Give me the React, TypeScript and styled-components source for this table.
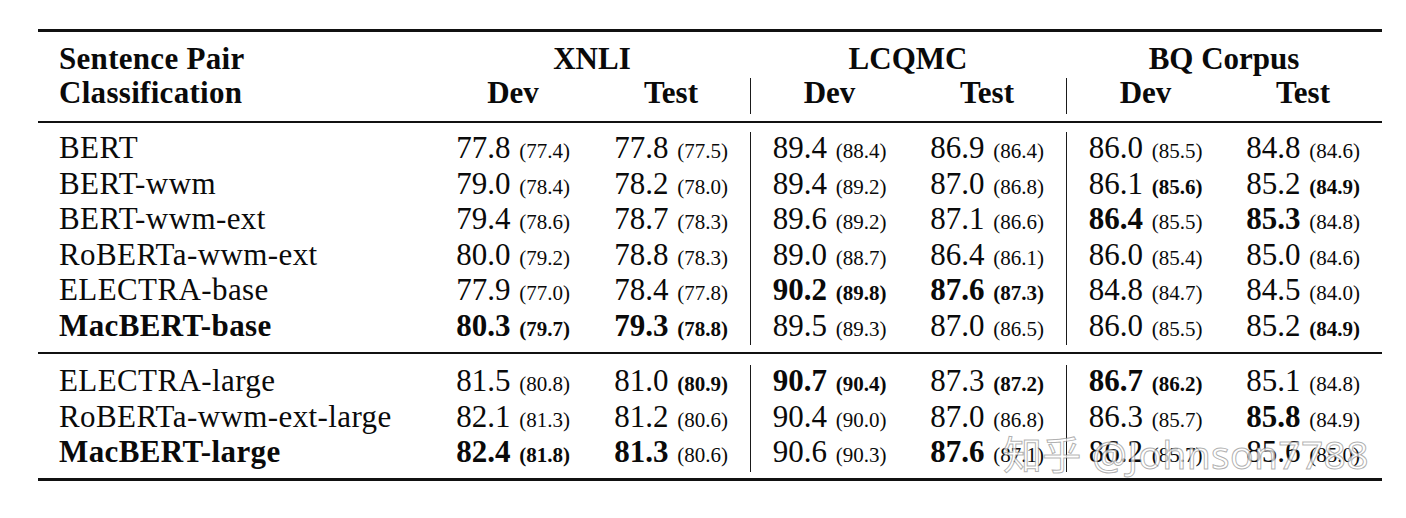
import React from "react";
import styled, { createGlobalStyle } from "styled-components";

const GlobalStyle = createGlobalStyle`
  html, body { margin: 0; padding: 0; background: #ffffff; }
  body { font-family: "Liberation Serif", "Times New Roman", serif; color: #0a0a0a; }
`;

const Page = styled.div`
  padding: 29px 0 0 38px;
  width: 1406px;
  height: 518px;
  box-sizing: border-box;
  overflow: hidden;
`;

const Table = styled.div`
  position: relative;
  width: 1344px;
`;

const Rule = styled.div<{ $thick?: boolean }>`
  height: ${(p) => (p.$thick ? "3px" : "2px")};
  background: #111;
`;

const Grid = styled.div<{ $pt: number; $pb: number }>`
  display: grid;
  grid-template-columns: 396px repeat(6, 158px);
  padding: ${(p) => p.$pt}px 0 ${(p) => p.$pb}px;
`;

const HeadCell = styled.div<{ $span?: number; $left?: boolean; $divider?: boolean; $h: number }>`
  grid-column: span ${(p) => p.$span ?? 1};
  font-weight: 700;
  font-size: 31px;
  line-height: 30px;
  height: ${(p) => p.$h}px;
  box-sizing: border-box;
  text-align: ${(p) => (p.$left ? "left" : "center")};
  padding-left: ${(p) => (p.$left ? "21px" : "0")};
  letter-spacing: ${(p) => (p.$left ? "0.3px" : "0")};
  border-left: ${(p) => (p.$divider ? "1.5px solid #1a1a1a" : "none")};
  white-space: nowrap;
`;

const NameCell = styled.div<{ $bold?: boolean }>`
  font-size: 31px;
  line-height: 31.5px;
  height: 35.5px;
  padding-left: 21px;
  letter-spacing: 0.4px;
  font-weight: ${(p) => (p.$bold ? 700 : 400)};
  white-space: nowrap;
  box-sizing: border-box;
`;

const NumCell = styled.div<{ $divider?: boolean }>`
  font-size: 31px;
  line-height: 31.5px;
  height: 35.5px;
  text-align: center;
  white-space: nowrap;
  box-sizing: border-box;
  border-left: ${(p) => (p.$divider ? "1.5px solid #1a1a1a" : "none")};
`;

const Main = styled.span<{ $bold?: boolean }>`
  font-weight: ${(p) => (p.$bold ? 700 : 400)};
`;

const Sub = styled.span<{ $bold?: boolean }>`
  font-size: 21px;
  line-height: 1;
  font-weight: ${(p) => (p.$bold ? 700 : 400)};
  margin-left: 1px;
`;

const Watermark = styled.div`
  position: absolute;
  left: 965px;
  top: 402px;
  font-family: "Noto Sans", "Noto Sans CJK SC", sans-serif;
  font-size: 39px;
  line-height: 46px;
  font-weight: 400;
  letter-spacing: 0.3px;
  color: rgba(255, 255, 255, 0.72);
  -webkit-text-stroke: 1px rgba(110, 110, 110, 0.55);
  white-space: nowrap;
  pointer-events: none;
`;

type Val = { v: string; p: string; bv?: boolean; bp?: boolean };
type Row = { name: string; bold?: boolean; vals: Val[] };

const V = (v: string, p: string, bv = false, bp = false): Val => ({ v, p, bv, bp });

const group1: Row[] = [
  { name: "BERT", vals: [V("77.8", "77.4"), V("77.8", "77.5"), V("89.4", "88.4"), V("86.9", "86.4"), V("86.0", "85.5"), V("84.8", "84.6")] },
  { name: "BERT-wwm", vals: [V("79.0", "78.4"), V("78.2", "78.0"), V("89.4", "89.2"), V("87.0", "86.8"), V("86.1", "85.6", false, true), V("85.2", "84.9", false, true)] },
  { name: "BERT-wwm-ext", vals: [V("79.4", "78.6"), V("78.7", "78.3"), V("89.6", "89.2"), V("87.1", "86.6"), V("86.4", "85.5", true), V("85.3", "84.8", true)] },
  { name: "RoBERTa-wwm-ext", vals: [V("80.0", "79.2"), V("78.8", "78.3"), V("89.0", "88.7"), V("86.4", "86.1"), V("86.0", "85.4"), V("85.0", "84.6")] },
  { name: "ELECTRA-base", vals: [V("77.9", "77.0"), V("78.4", "77.8"), V("90.2", "89.8", true, true), V("87.6", "87.3", true, true), V("84.8", "84.7"), V("84.5", "84.0")] },
  { name: "MacBERT-base", bold: true, vals: [V("80.3", "79.7", true, true), V("79.3", "78.8", true, true), V("89.5", "89.3"), V("87.0", "86.5"), V("86.0", "85.5"), V("85.2", "84.9", false, true)] },
];

const group2: Row[] = [
  { name: "ELECTRA-large", vals: [V("81.5", "80.8"), V("81.0", "80.9", false, true), V("90.7", "90.4", true, true), V("87.3", "87.2", false, true), V("86.7", "86.2", true, true), V("85.1", "84.8")] },
  { name: "RoBERTa-wwm-ext-large", vals: [V("82.1", "81.3"), V("81.2", "80.6"), V("90.4", "90.0"), V("87.0", "86.8"), V("86.3", "85.7"), V("85.8", "84.9", true)] },
  { name: "MacBERT-large", bold: true, vals: [V("82.4", "81.8", true, true), V("81.3", "80.6", true), V("90.6", "90.3"), V("87.6", "87.1", true), V("86.2", "85.7"), V("85.6", "85.0")] },
];

const Rows: React.FC<{ rows: Row[] }> = ({ rows }) => (
  <>
    {rows.map((r) => (
      <React.Fragment key={r.name}>
        <NameCell $bold={r.bold}>{r.name}</NameCell>
        {r.vals.map((c, i) => (
          <NumCell key={i} $divider={i === 2 || i === 4}>
            <Main $bold={c.bv}>{c.v}</Main> <Sub $bold={c.bp}>({c.p})</Sub>
          </NumCell>
        ))}
      </React.Fragment>
    ))}
  </>
);

export default function App() {
  return (
    <>
      <GlobalStyle />
      <Page>
        <Table>
          <Rule $thick />
          <Grid $pt={12} $pb={7}>
            <HeadCell $left $h={34}>Sentence Pair</HeadCell>
            <HeadCell $span={2} $h={34}>XNLI</HeadCell>
            <HeadCell $span={2} $h={34}>LCQMC</HeadCell>
            <HeadCell $span={2} $h={34}>BQ Corpus</HeadCell>
            <HeadCell $left $h={36}>Classification</HeadCell>
            <HeadCell $h={36}>Dev</HeadCell>
            <HeadCell $h={36}>Test</HeadCell>
            <HeadCell $h={36} $divider>Dev</HeadCell>
            <HeadCell $h={36}>Test</HeadCell>
            <HeadCell $h={36} $divider>Dev</HeadCell>
            <HeadCell $h={36}>Test</HeadCell>
          </Grid>
          <Rule />
          <Grid $pt={9} $pb={7}>
            <Rows rows={group1} />
          </Grid>
          <Rule />
          <Grid $pt={11} $pb={6}>
            <Rows rows={group2} />
          </Grid>
          <Rule $thick />
          <Watermark>知乎 @Johnson7788</Watermark>
        </Table>
      </Page>
    </>
  );
}
